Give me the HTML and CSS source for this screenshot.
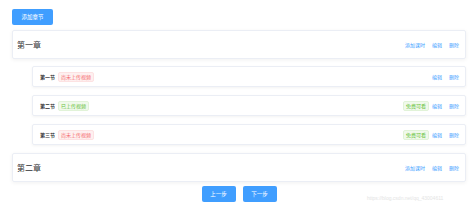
FILE: index.html
```html
<!DOCTYPE html>
<html lang="zh-CN">
<head>
  <meta charset="UTF-8">
  <title>章节管理</title>
  <link rel="stylesheet" href="styles.css">
</head>
<body>
  <div class="page">
    <button class="btn add-btn">添加章节</button>

    <div class="chapter">
      <span class="chapter-title">第一章</span>
      <div class="actions">
        <a class="link">添加课时</a>
        <a class="link">编辑</a>
        <a class="link">删除</a>
      </div>
    </div>

    <div class="sections">
      <div class="section">
        <div class="section-left">
          <span class="section-title">第一节</span>
          <span class="tag tag-red">尚未上传视频</span>
        </div>
        <div class="actions">
          <a class="link">编辑</a>
          <a class="link">删除</a>
        </div>
      </div>
      <div class="section">
        <div class="section-left">
          <span class="section-title">第二节</span>
          <span class="tag tag-green">已上传视频</span>
        </div>
        <div class="actions">
          <span class="tag tag-green free">免费可看</span>
          <a class="link">编辑</a>
          <a class="link">删除</a>
        </div>
      </div>
      <div class="section">
        <div class="section-left">
          <span class="section-title">第三节</span>
          <span class="tag tag-red">尚未上传视频</span>
        </div>
        <div class="actions">
          <span class="tag tag-green free">免费可看</span>
          <a class="link">编辑</a>
          <a class="link">删除</a>
        </div>
      </div>
    </div>

    <div class="chapter">
      <span class="chapter-title">第二章</span>
      <div class="actions">
        <a class="link">添加课时</a>
        <a class="link">编辑</a>
        <a class="link">删除</a>
      </div>
    </div>

    <div class="steps">
      <button class="btn step-btn">上一步</button>
      <button class="btn step-btn">下一步</button>
    </div>
  </div>
  <div class="watermark">https://blog.csdn.net/qq_43004611</div>
</body>
</html>
```

FILE: styles.css
```css
body {
  margin: 0;
  background: #fff;
  font-family: "Noto Sans CJK SC", "Noto Sans", sans-serif;
  color: #303133;
}

.page {
  padding: 9px 8px 0 12px;
}

.btn {
  display: block;
  border: none;
  border-radius: 2px;
  background-color: #409eff;
  color: #fff;
  font-family: inherit;
  font-size: 5.5px;
  padding: 0;
  cursor: pointer;
}

.add-btn {
  width: 41px;
  height: 16px;
  margin-bottom: 5px;
}

.chapter {
  display: flex;
  justify-content: space-between;
  align-items: center;
  height: 27px;
  padding: 0 6px 0 4px;
  border: 1px solid #ebeef5;
  border-radius: 2px;
  box-shadow: 0 1px 4px rgba(0, 0, 0, 0.06);
}

.chapter-title {
  font-size: 8px;
}

.actions {
  display: flex;
  align-items: center;
  gap: 7px;
  font-size: 5px;
}

.link {
  color: #409eff;
  cursor: pointer;
}

.sections {
  margin: 7px 0 8px 20px;
  display: flex;
  flex-direction: column;
  gap: 8px;
}

.section {
  display: flex;
  justify-content: space-between;
  align-items: center;
  height: 19px;
  padding: 0 6px 0 7px;
  border: 1px solid #ebeef5;
  border-radius: 2px;
  box-shadow: 0 1px 3px rgba(0, 0, 0, 0.05);
}

.section-left {
  display: flex;
  align-items: center;
  gap: 3px;
}

.section-title {
  font-size: 5px;
  font-weight: bold;
}

.tag {
  display: inline-block;
  font-size: 5px;
  line-height: 8px;
  padding: 0 2px;
  border-radius: 2px;
  border: 1px solid;
}

.tag-red {
  background-color: #fef0f0;
  border-color: #fde2e2;
  color: #f56c6c;
}

.tag-green {
  background-color: #f0f9eb;
  border-color: #e1f3d8;
  color: #67c23a;
}

.free {
  margin-right: -4px;
}

.steps {
  display: flex;
  justify-content: center;
  gap: 7px;
  margin-top: 4px;
}

.step-btn {
  width: 34px;
  height: 16px;
}

.watermark {
  position: absolute;
  left: 367px;
  top: 195px;
  font-family: "Liberation Sans", sans-serif;
  font-size: 5px;
  color: #e4e4e4;
}
```
